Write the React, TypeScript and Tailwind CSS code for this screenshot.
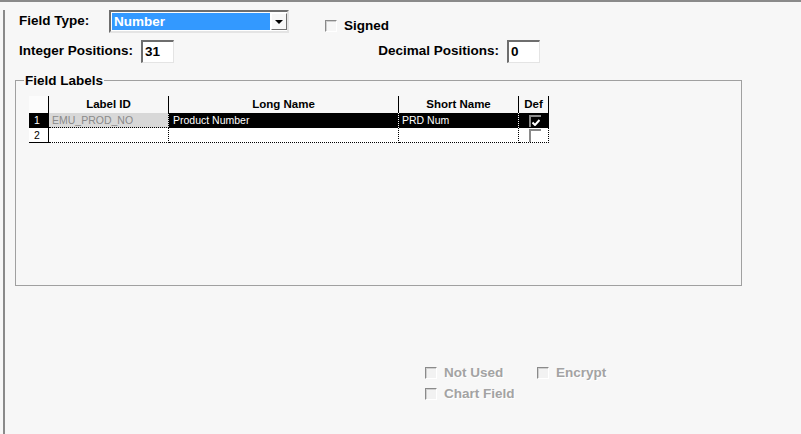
import React from "react";

const FONT = "font-['Liberation_Sans',Arial,sans-serif]";

const COLUMNS = [
  { id: "num", label: "", width: "w-[20px]" },
  { id: "labelId", label: "Label ID", width: "w-[120px]" },
  { id: "longName", label: "Long Name", width: "w-[230px]" },
  { id: "shortName", label: "Short Name", width: "w-[120px]" },
  { id: "def", label: "Def", width: "w-[30px]" },
] as const;

function SunkenInput({ value }: { value: string }) {
  return (
    <div className="h-[23px] w-[33px] border-t-2 border-l-2 border-t-[#6e6e6e] border-l-[#6e6e6e] border-r border-b border-r-[#e4e4e4] border-b-[#e4e4e4] bg-white pl-[2px] text-[13.5px] font-bold leading-[19px] text-black">
      {value}
    </div>
  );
}

function CheckBox({ disabled }: { disabled?: boolean }) {
  return (
    <div
      className={`h-[12px] w-[12px] shrink-0 border border-t-[#8a8a8a] border-l-[#8a8a8a] border-r-white border-b-white ${
        disabled ? "bg-[#f2f2f2]" : "bg-[#f7f7f7]"
      } shadow-[inset_1px_1px_0_#d0d0d0]`}
    />
  );
}

function DisabledOption({ label }: { label: string }) {
  return (
    <div className="flex h-[12px] items-center gap-[7px]">
      <CheckBox disabled />
      <span className="text-[13.5px] font-bold leading-none text-[#a3a3a3] [text-shadow:1px_1px_0_#ffffff]">
        {label}
      </span>
    </div>
  );
}

function LabelsGrid() {
  return (
    <div className="w-[520px] text-black">
      {/* header */}
      <div className="flex h-[17px]">
        {COLUMNS.map((c) => (
          <div
            key={c.id}
            className={`${c.width} border-r border-black text-center text-[11.5px] font-bold leading-[17px] ${
              c.id === "num" ? "bg-[#fcfcfc]" : ""
            }`}
          >
            {c.label}
          </div>
        ))}
      </div>

      {/* row 1 (selected) */}
      <div className="flex h-[15px] text-[10.5px] leading-[14px]">
        <div className="w-[20px] bg-black pl-[5px] text-white">1</div>
        <div className="w-[120px] border-r border-b border-dotted border-black bg-[#d8d8d8] pl-[3px] text-[#8a8a8a]">
          EMU_PROD_NO
        </div>
        <div className="w-[230px] border-r border-dotted border-[#f7f7f7] bg-black pl-[4px] text-white">
          Product Number
        </div>
        <div className="w-[120px] border-r border-dotted border-[#f7f7f7] bg-black pl-[3px] text-white">
          PRD Num
        </div>
        <div className="flex w-[30px] items-end justify-center border-r border-dotted border-black bg-black pb-px">
          <div className="ml-[2px] flex h-[12px] w-[12px] items-center justify-center border-t-2 border-l-2 border-[#8a8a8a] bg-black">
            <svg width="8" height="7" viewBox="0 0 8 7">
              <path d="M0.5 3.5 L3 6 L7.5 1" stroke="#ffffff" strokeWidth="2" fill="none" />
            </svg>
          </div>
        </div>
      </div>

      {/* row 2 */}
      <div className="flex h-[15px] text-[10.5px] leading-[14px]">
        <div className="w-[20px] border-r border-b border-black bg-white pl-[5px]">2</div>
        <div className="w-[120px] border-r border-b border-dotted border-black bg-white" />
        <div className="w-[230px] border-r border-b border-dotted border-black bg-white" />
        <div className="w-[120px] border-r border-b border-dotted border-black bg-white" />
        <div className="flex w-[30px] justify-center overflow-hidden border-r border-b border-dotted border-black bg-white pt-[1px]">
          <div className="ml-[2px] h-[14px] w-[12px] border-t-2 border-l-2 border-[#8a8a8a] bg-white" />
        </div>
      </div>
    </div>
  );
}

export default function App() {
  return (
    <div className={`${FONT} h-[434px] w-[801px] overflow-hidden border-t-2 border-[#8a8a8a] bg-[#f7f7f7] pl-[3px]`}>
      <div className="h-full border-l-2 border-[#8a8a8a]">
        {/* Field type row */}
        <div className="mt-[8px] flex items-start pl-[14px]">
          <div className="flex h-[23px] w-[90px] items-center text-[13.5px] font-bold">Field Type:</div>
          <div className="flex h-[23px] w-[180px] border-2 border-t-[#6e6e6e] border-l-[#6e6e6e] border-r-[#e4e4e4] border-b-[#e4e4e4] bg-white py-px pl-px">
            <div className="flex-1 bg-[#3399ff] pl-[2px] text-[13.5px] font-bold leading-[17px] text-white">
              Number
            </div>
            <div className="ml-px flex w-[16px] items-center justify-center border border-t-white border-l-white border-r-[#6e6e6e] border-b-[#6e6e6e] bg-[#f7f7f7]">
              <div className="h-0 w-0 border-x-[4px] border-t-[4px] border-x-transparent border-t-black" />
            </div>
          </div>
          <div className="ml-[36px] mt-[9px] flex items-center gap-[7px]">
            <CheckBox />
            <span className="text-[13.5px] font-bold leading-none">Signed</span>
          </div>
        </div>

        {/* positions row */}
        <div className="mt-[7px] flex items-center pl-[14px]">
          <div className="w-[122px] text-[13.5px] font-bold">Integer Positions:</div>
          <SunkenInput value="31" />
          <div className="w-[325px] text-right text-[13.5px] font-bold">Decimal Positions:</div>
          <div className="ml-[8px]">
            <SunkenInput value="0" />
          </div>
        </div>

        {/* Field Labels group */}
        <div className="relative ml-[10px] mt-[17px] h-[206px] w-[727px] border border-[#a0a0a0] pl-[13px] pt-[15px]">
          <span className="absolute left-[8px] top-0 -translate-y-1/2 bg-[#f7f7f7] px-px text-[13.5px] font-bold leading-none">
            Field Labels
          </span>
          <LabelsGrid />
        </div>

        {/* disabled options */}
        <div className="ml-[420px] mt-[81px] grid w-[200px] grid-cols-[112px_1fr] gap-y-[9px]">
          <DisabledOption label="Not Used" />
          <DisabledOption label="Encrypt" />
          <DisabledOption label="Chart Field" />
        </div>
      </div>
    </div>
  );
}
